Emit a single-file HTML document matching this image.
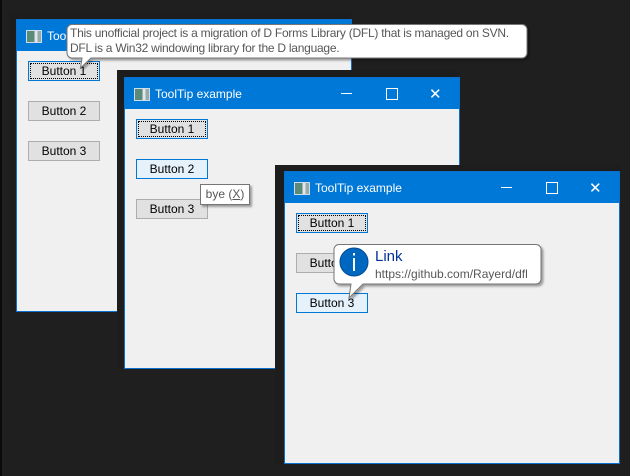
<!DOCTYPE html><html><head><style>
body{margin:0;width:630px;height:476px;background:#1f1f1f;position:relative;overflow:hidden;font-family:"Liberation Sans",sans-serif;font-size:12px}
.sh{position:absolute;background:#1d1d1d}
.w{position:absolute;background:#f0f0f0;border:1px solid #0b6fcf;box-sizing:border-box}
.t{position:absolute;left:0;right:0;top:0;height:31px;background:#0078d7;color:#fff;font-size:12px}
.t .ic{position:absolute;left:9px;top:10px;width:14px;height:11px;background:linear-gradient(90deg,#5a8a78 0 55%,#dfe7e9 55% 75%,#9aa 75%);border:1px solid #cde}
.t .tx{position:absolute;left:30px;top:9px}
.mn{position:absolute;left:216px;top:15px;width:11px;height:1px;background:#fff}
.mx{position:absolute;left:261px;top:10px;width:10px;height:10px;border:1px solid #fff}
.cl{position:absolute;left:304px;top:7px;font-size:15px}
.btn{position:absolute;width:72px;height:20px;box-sizing:border-box;border:1px solid #adadad;background:#e1e1e1;text-align:center;line-height:18px;color:#000}
.btn.f{border:1px solid #0078d7;outline:1px dotted #000;outline-offset:-3px}
.btn.h{border:1px solid #0078d7;background:#e5f1fb}
.tip{position:absolute;background:#fff;border:1px solid #767676;color:#575757;box-shadow:2px 2px 2px rgba(0,0,0,.35)}
</style></head><body>
<div style="position:absolute;left:0;top:0;width:2px;height:476px;background:#0a0a0a"></div>
<div class="sh" style="left:9px;top:12px;width:342px;height:299px"></div>
<div class="w" style="left:16px;top:19px;width:336px;height:293px"><div class="t"><div class="ic"></div><div class="tx">ToolTip example</div></div>
<div class="btn f" style="left:11px;top:41px">Button 1</div>
<div class="btn" style="left:11px;top:81px">Button 2</div>
<div class="btn" style="left:11px;top:121px">Button 3</div></div>

<div class="sh" style="left:117px;top:70px;width:342px;height:298px"></div>
<div class="w" style="left:124px;top:77px;width:336px;height:292px"><div class="t"><div class="ic"></div><div class="tx">ToolTip example</div>
<div class="mn"></div><div class="mx"></div><div class="cl">✕</div></div>
<div class="btn f" style="left:11px;top:41px">Button 1</div>
<div class="btn h" style="left:11px;top:81px">Button 2</div>
<div class="btn" style="left:11px;top:121px">Button 3</div></div>
<div class="tip" style="left:200px;top:184px;width:48px;height:19px;line-height:19px;text-align:center;border-radius:0">bye (<u>X</u>)</div>

<div class="sh" style="left:275px;top:165px;width:345px;height:299px"></div>
<div class="w" style="left:284px;top:171px;width:336px;height:293px"><div class="t"><div class="ic"></div><div class="tx">ToolTip example</div>
<div class="mn"></div><div class="mx"></div><div class="cl">✕</div></div>
<div class="btn f" style="left:11px;top:41px">Button 1</div>
<div class="btn" style="left:11px;top:81px">Button 2</div>
<div class="btn h" style="left:11px;top:121px">Button 3</div></div>

<svg style="position:absolute;left:0;top:0" width="630" height="476">
<defs><filter id="s"><feDropShadow dx="2" dy="2" stdDeviation="1" flood-opacity=".35"/></filter></defs>
<path d="M72 24.5H522a5 5 0 0 1 5 5V53a5 5 0 0 1-5 5H91L80.5 68L82 58H72a5 5 0 0 1-5-5V29.5a5 5 0 0 1 5-5Z" fill="#fff" stroke="#767676" filter="url(#s)"/>
<path d="M339 244.5H536a5 5 0 0 1 5 5V279a5 5 0 0 1-5 5H363L349 298L351 284H339a5 5 0 0 1-5-5V249.5a5 5 0 0 1 5-5Z" fill="#fff" stroke="#767676" filter="url(#s)"/>
<circle cx="354" cy="262" r="14" fill="#0067c0" stroke="#004a90"/>
<rect x="353" y="258" width="2" height="13" fill="#fff"/><rect x="353" y="253" width="2" height="2.5" fill="#fff"/>
</svg>
<div style="position:absolute;left:70px;top:26px;color:#575757;line-height:15px;letter-spacing:-0.25px;white-space:nowrap">This unofficial project is a migration of D Forms Library (DFL) that is managed on SVN.<br>DFL is a Win32 windowing library for the D language.</div>
<div style="position:absolute;left:375px;top:248px;color:#003399;font-size:15px">Link</div>
<div style="position:absolute;left:375px;top:267px;color:#575757;font-size:12px">https://github.com/Rayerd/dfl</div>
</body></html>
